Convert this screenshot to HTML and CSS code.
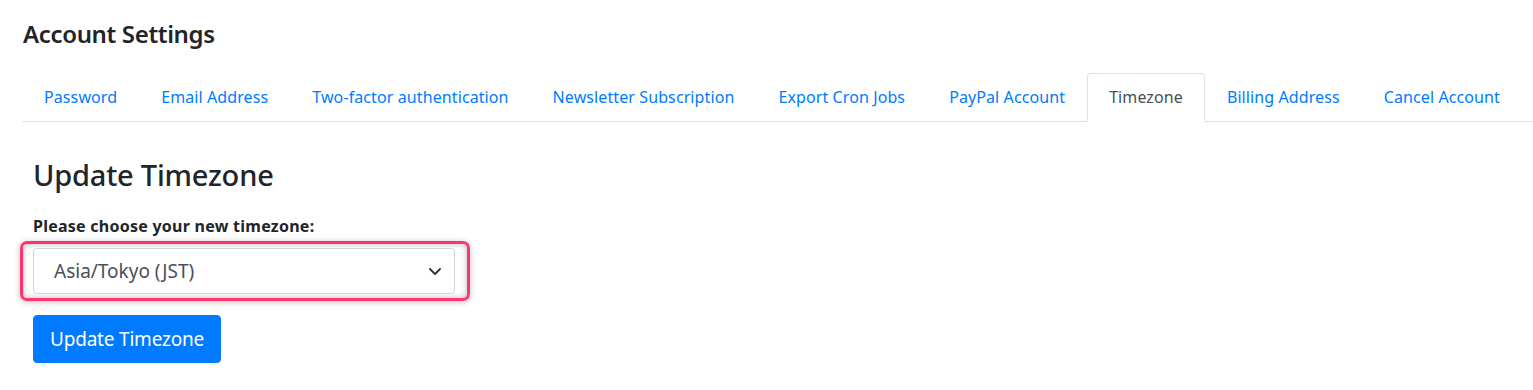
FILE: index.html
```html
<!DOCTYPE html>
<html>
<head>
<meta charset="utf-8">
<link rel="stylesheet" href="styles.css">
</head>
<body>
<div class="page">
  <h1 class="page-title">Account Settings</h1>
  <ul class="tabs">
    <li class="tab">Password</li>
    <li class="tab">Email Address</li>
    <li class="tab">Two-factor authentication</li>
    <li class="tab">Newsletter Subscription</li>
    <li class="tab">Export Cron Jobs</li>
    <li class="tab">PayPal Account</li>
    <li class="tab active">Timezone</li>
    <li class="tab">Billing Address</li>
    <li class="tab">Cancel Account</li>
  </ul>
  <div class="pane">
    <h2 class="pane-title">Update Timezone</h2>
    <label class="label">Please choose your new timezone:</label>
    <div class="highlight">
      <div class="select">
        <span class="select-value">Asia/Tokyo (JST)</span>
        <svg class="chevron" width="14" height="10" viewBox="0 0 14 10"><path d="M2 3 L7 8 L12 3" fill="none" stroke="#343a40" stroke-width="2" stroke-linecap="round" stroke-linejoin="round"/></svg>
      </div>
    </div>
    <button class="btn">Update Timezone</button>
  </div>
</div>
</body>
</html>
```

FILE: styles.css
```css
* { box-sizing: border-box; }
body {
  margin: 0;
  background: #fff;
  font-family: "Noto Sans", "Open Sans", sans-serif;
  color: #212529;
}
.page {
  padding: 19px 0 0 22px;
}
.page-title {
  margin: 0 0 0 1px;
  font-size: 24px;
  font-weight: 600;
  line-height: 30px;
  letter-spacing: -0.35px;
}
.tabs {
  list-style: none;
  margin: 24px 0 0 0;
  padding: 0;
  display: flex;
  border-bottom: 1px solid #dee2e6;
}
.tab {
  padding: 11px 21px 12px;
  font-size: 16px;
  line-height: 24px;
  color: #007bff;
  border: 1px solid transparent;
  border-top-left-radius: 4px;
  border-top-right-radius: 4px;
  margin-bottom: -1px;
  letter-spacing: 0.1px;
  white-space: nowrap;
}
.tab.active {
  color: #495057;
  border-color: #dee2e6 #dee2e6 #fff;
  background: #fff;
}
.pane {
  padding: 0 0 0 11px;
}
.pane-title {
  margin: 34px 0 0 0;
  font-size: 29px;
  font-weight: 500;
  line-height: 38px;
  letter-spacing: -0.2px;
}
.label {
  display: block;
  margin-top: 20px;
  font-size: 16px;
  font-weight: 700;
  line-height: 24px;
  letter-spacing: 0.25px;
}
.highlight {
  margin: 3px 0 0 -13px;
  width: 450px;
  padding: 4px 12px 4px 10px;
  border: 3px solid #ff3370;
  border-radius: 7px;
  box-shadow: 0 1px 6px rgba(0,0,0,0.25), inset 0 0 6px rgba(0,0,0,0.28);
}
.select {
  height: 46px;
  border: 1px solid #ced4da;
  border-radius: 4px;
  background: #fff;
  display: flex;
  align-items: center;
  justify-content: space-between;
  padding: 0 12px 0 20px;
}
.select-value {
  font-size: 19px;
  color: #495057;
}
.chevron { display: block; }
.btn {
  margin-top: 14px;
  display: block;
  height: 48px;
  padding: 0 16px;
  background: #007bff;
  border: 1px solid #007bff;
  border-radius: 4px;
  color: #fff;
  font-family: "Noto Sans", "Open Sans", sans-serif;
  font-size: 19px;
  letter-spacing: -0.2px;
}
```
